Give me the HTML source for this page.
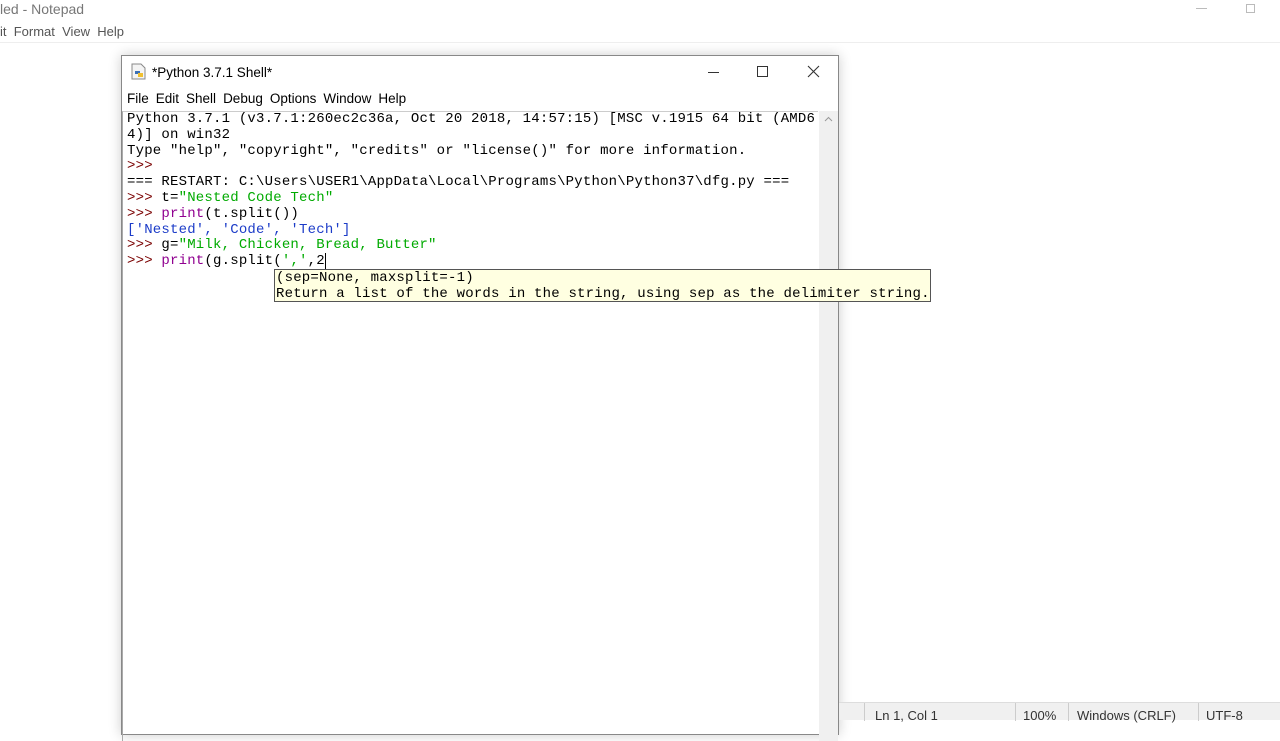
<!DOCTYPE html>
<html><head><meta charset="utf-8"><style>
*{margin:0;padding:0;box-sizing:border-box}
body{width:1280px;height:720px;background:#fff;position:relative;overflow:hidden;font-family:"Liberation Sans",sans-serif}
.np{position:absolute;color:#555;font-size:13px}
.win{position:absolute;left:121px;top:55px;width:718px;height:680px;background:#fff;border:1px solid #888;box-shadow:0 0 12px rgba(0,0,0,.2)}
.title{position:absolute;left:30px;top:9px;font-size:13.5px;color:#000}
.menu{position:absolute;left:5px;top:35px;font-size:13.5px;color:#000}
.menu span{margin-right:7px}
.text{position:absolute;left:0;top:55px;width:696px;height:630px;border-top:1px solid #ccc;border-left:1px solid #aaa}
pre{position:absolute;left:4px;top:0px;font-family:"Liberation Mono",monospace;font-size:14px;letter-spacing:0.2px;line-height:15.8px;color:#000}
.sb{position:absolute;left:697px;top:55px;width:19px;height:630px;background:#f0f0f0}
.p{color:#7a0000}.s{color:#00aa00}.k{color:#900090}.o{color:#1c3cc8}
.tip{position:absolute;left:274px;top:269px;width:657px;height:33px;background:#ffffe1;border:1px solid #555;font-family:"Liberation Mono",monospace;font-size:14px;letter-spacing:0.2px;line-height:15.8px;padding:1px 0 0 1px;color:#000;white-space:pre}
.status{position:absolute;left:839px;top:702px;width:441px;height:18px;background:#f0f0f0;border-top:1px solid #ddd;font-size:13px;color:#333}
.status span{position:absolute;top:5px}
.status i{position:absolute;top:0;width:1px;height:18px;background:#ccc}
</style></head><body>
<div class="np" style="left:0;top:1px;font-size:14px;color:#777">led - Notepad</div>
<div class="np" style="left:0;top:24px">it&nbsp;&nbsp;Format&nbsp;&nbsp;View&nbsp;&nbsp;Help</div>
<div style="position:absolute;left:0;top:42px;width:1280px;height:1px;background:#eee"></div>
<div style="position:absolute;left:1196px;top:8px;width:11px;height:1px;background:#bbb"></div>
<div style="position:absolute;left:1246px;top:4px;width:9px;height:9px;border:1px solid #bbb"></div>
<div class="win">
 <svg style="position:absolute;left:8px;top:7px" width="17" height="17" viewBox="0 0 17 17"><path d="M2 1h9l4 4v11H2z" fill="#f4f4f4" stroke="#888"/><path d="M5 8h5v3H5z" fill="#3b6fb6"/><path d="M8 10h5v4H8z" fill="#f0c030"/></svg>
 <div class="title">*Python 3.7.1 Shell*</div>
 <div style="position:absolute;left:586px;top:16px;width:11px;height:1px;background:#333"></div>
 <div style="position:absolute;left:635px;top:10px;width:11px;height:11px;border:1px solid #333"></div>
 <svg style="position:absolute;left:685px;top:9px" width="13" height="13"><path d="M1 1L12 12M12 1L1 12" stroke="#333" stroke-width="1.1"/></svg>
 <div class="menu"><span>File</span><span>Edit</span><span>Shell</span><span>Debug</span><span>Options</span><span>Window</span><span>Help</span></div>
 <div class="text"><pre>Python 3.7.1 (v3.7.1:260ec2c36a, Oct 20 2018, 14:57:15) [MSC v.1915 64 bit (AMD6
4)] on win32
Type "help", "copyright", "credits" or "license()" for more information.
<span class="p">&gt;&gt;&gt; </span>
=== RESTART: C:\Users\USER1\AppData\Local\Programs\Python\Python37\dfg.py ===
<span class="p">&gt;&gt;&gt; </span>t=<span class="s">"Nested Code Tech"</span>
<span class="p">&gt;&gt;&gt; </span><span class="k">print</span>(t.split())
<span class="o">['Nested', 'Code', 'Tech']</span>
<span class="p">&gt;&gt;&gt; </span>g=<span class="s">"Milk, Chicken, Bread, Butter"</span>
<span class="p">&gt;&gt;&gt; </span><span class="k">print</span>(g.split(<span class="s">','</span>,2<span style="border-left:1px solid #000"></span></pre></div>
 <div class="sb"><svg style="position:absolute;left:5px;top:5px" width="9" height="6"><path d="M1 5L4.5 1.5L8 5" stroke="#999" fill="none"/></svg></div>
</div>
<div class="tip">(sep=None, maxsplit=-1)
Return a list of the words in the string, using sep as the delimiter string.</div>
<div class="status">
 <i style="left:25px"></i><span style="left:36px">Ln 1, Col 1</span>
 <i style="left:176px"></i><span style="left:184px">100%</span>
 <i style="left:229px"></i><span style="left:238px">Windows (CRLF)</span>
 <i style="left:359px"></i><span style="left:367px">UTF-8</span>
</div>
</body></html>
